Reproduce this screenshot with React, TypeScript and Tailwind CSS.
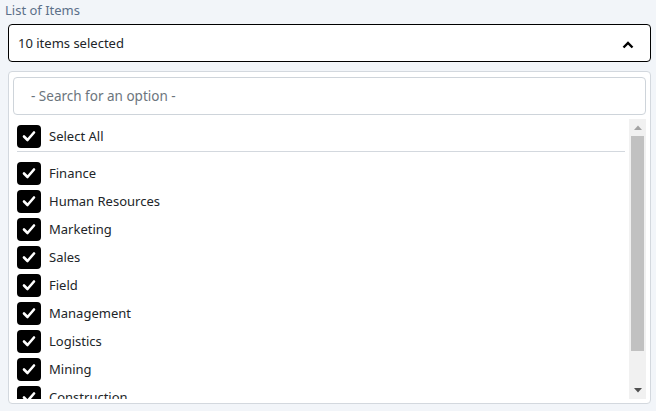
import React from "react";

const items = [
  "Finance",
  "Human Resources",
  "Marketing",
  "Sales",
  "Field",
  "Management",
  "Logistics",
  "Mining",
  "Construction",
];

function Check() {
  return (
    <div className="w-[24px] h-[23px] rounded-[4px] bg-black flex items-center justify-center shrink-0">
      <svg width="16" height="16" viewBox="0 0 16 16">
        <polyline points="3,8.5 6.5,12 13,4.5" fill="none" stroke="white" strokeWidth="2.6" strokeLinecap="round" strokeLinejoin="round" />
      </svg>
    </div>
  );
}

function Row({ label }: { label: string }) {
  return (
    <div className="h-[28px] flex items-center gap-[8px] pl-[4px]">
      <Check />
      <span className="text-[13px] text-[#212529] pt-[2px]">{label}</span>
    </div>
  );
}

export default function App() {
  return (
    <div
      className="w-full h-[411px] bg-[#f2f5f9] overflow-hidden pl-[5px] pr-[5px]"
      style={{ fontFamily: '"Noto Sans", sans-serif' }}
    >
      <div className="h-[24px] pt-[2px] text-[13px] leading-[16px] text-[#5c7089]">List of Items</div>
      <div className="ml-[3px] h-[38px] bg-white border border-black rounded-[4px] flex items-center justify-between pl-[9px] pr-[16px]">
        <span className="text-[13px] text-[#212529] pt-[1px]">10 items selected</span>
        <svg width="12" height="8" viewBox="0 0 12 8" className="mt-[3px]">
          <polyline points="1.5,6.5 6,2 10.5,6.5" fill="none" stroke="black" strokeWidth="2.4" />
        </svg>
      </div>
      <div className="ml-[3px] mt-[9px] h-[333px] bg-white border border-[#d3d8de] rounded-[4px] pt-[5px] px-[4px] pb-[4px] flex flex-col">
        <div className="h-[38px] border border-[#ced4da] rounded-[4px] flex items-center pl-[17px] shrink-0">
          <span className="text-[13.5px] text-[#6c757d] pt-[1px]">- Search for an option -</span>
        </div>
        <div className="mt-[4px] flex-1 flex min-h-0">
          <div className="flex-1 overflow-hidden pt-[3px]">
            <Row label="Select All" />
            <div className="ml-[4px] mr-[4px] mt-[1px] h-px bg-[#d3d8de]" />
            <div className="pt-[7px]">
              {items.map((it) => (
                <Row key={it} label={it} />
              ))}
            </div>
          </div>
          <div className="w-[17px] bg-[#f1f1f1] flex flex-col items-center shrink-0">
            <div className="h-[17px] flex items-center justify-center">
              <svg width="8" height="5" viewBox="0 0 8 5">
                <polygon points="0,5 8,5 4,0.5" fill="#a3a3a3" />
              </svg>
            </div>
            <div className="w-[13px] h-[215px] bg-[#c1c1c1]" />
            <div className="flex-1" />
            <div className="h-[17px] flex items-center justify-center">
              <svg width="8" height="5" viewBox="0 0 8 5">
                <polygon points="0,0 8,0 4,4.5" fill="#505050" />
              </svg>
            </div>
          </div>
        </div>
      </div>
    </div>
  );
}
